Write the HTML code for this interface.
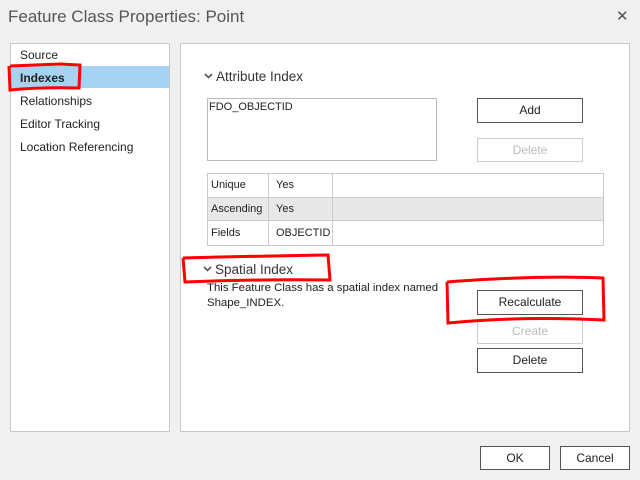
<html><head><style>
body{margin:0;width:640px;height:480px;background:#f0f0f0;font-family:"Liberation Sans",sans-serif;font-size:12px;color:#222;position:relative;overflow:hidden}
div,span{position:absolute;box-sizing:border-box}
.p{background:#fff;border:1px solid #c8c8c8}
.b{background:#fff;border:1px solid #555;text-align:center;line-height:23px;font-size:12px}
.d{border-color:#ccc;color:#bbb}
.t{font-size:11px}
.h{font-size:13.5px;color:#333}
</style></head><body>
<span style="left:8px;top:7px;font-size:17px;color:#555">Feature Class Properties: Point</span>
<span style="left:616px;top:7px;font-size:15px;color:#555">✕</span>
<div class="p" style="left:10px;top:43px;width:160px;height:389px"></div>
<div style="left:11px;top:66px;width:158px;height:22px;background:#a6d3f2"></div>
<span style="left:20px;top:48px">Source</span>
<span style="left:20px;top:71px;font-weight:bold">Indexes</span>
<span style="left:20px;top:94px">Relationships</span>
<span style="left:20px;top:117px">Editor Tracking</span>
<span style="left:20px;top:140px">Location Referencing</span>
<div class="p" style="left:180px;top:43px;width:450px;height:389px"></div>
<svg style="position:absolute;left:204px;top:73px" width="9" height="6"><path d="M1 1 L4.5 4.5 L8 1" fill="none" stroke="#555" stroke-width="1.6"/></svg>
<span class="h" style="left:216px;top:69px">Attribute Index</span>
<div style="left:207px;top:98px;width:230px;height:63px;background:#fff;border:1px solid #bbb"></div>
<span class="t" style="left:209px;top:101px">FDO_OBJECTID</span>
<div class="b" style="left:477px;top:98px;width:106px;height:25px">Add</div>
<div class="b d" style="left:477px;top:138px;width:106px;height:24px">Delete</div>
<div style="left:207px;top:173px;width:397px;height:73px;border:1px solid #c8c8c8;background:#fff"></div>
<div style="left:208px;top:197px;width:395px;height:24px;background:#e8e8e8;border-top:1px solid #ccc;border-bottom:1px solid #ccc"></div>
<div style="left:268px;top:173px;width:1px;height:73px;background:#ccc"></div>
<div style="left:332px;top:173px;width:1px;height:73px;background:#ccc"></div>
<span class="t" style="left:211px;top:179px">Unique</span><span class="t" style="left:276px;top:179px">Yes</span>
<span class="t" style="left:211px;top:203px">Ascending</span><span class="t" style="left:276px;top:203px">Yes</span>
<span class="t" style="left:211px;top:227px">Fields</span><span class="t" style="left:276px;top:227px">OBJECTID</span>
<svg style="position:absolute;left:203px;top:266px" width="9" height="6"><path d="M1 1 L4.5 4.5 L8 1" fill="none" stroke="#555" stroke-width="1.6"/></svg>
<span class="h" style="left:215px;top:262px">Spatial Index</span>
<span style="left:207px;top:282px;font-size:11.4px">This Feature Class has a spatial index named</span>
<span style="left:207px;top:297px;font-size:11.4px">Shape_INDEX.</span>
<div class="b" style="left:477px;top:290px;width:106px;height:25px">Recalculate</div>
<div class="b d" style="left:477px;top:319px;width:106px;height:25px">Create</div>
<div class="b" style="left:477px;top:348px;width:106px;height:25px">Delete</div>
<div class="b" style="left:480px;top:446px;width:70px;height:24px">OK</div>
<div class="b" style="left:560px;top:446px;width:70px;height:24px">Cancel</div>
<svg style="position:absolute;left:0;top:0" width="640" height="480"><g fill="none" stroke="#f00" stroke-width="3">
<path d="M9 66 L10 90 Q40 87 79 88 L80 65 L60 64 L10 66"/>
<path d="M183 258 L185 282 Q260 279 330 280 L328 255 Q260 256 183 258"/>
<path d="M447 282 L448 323 Q520 316 604 320 L603 278 Q540 275 447 282"/>
</g></svg>
</body></html>
